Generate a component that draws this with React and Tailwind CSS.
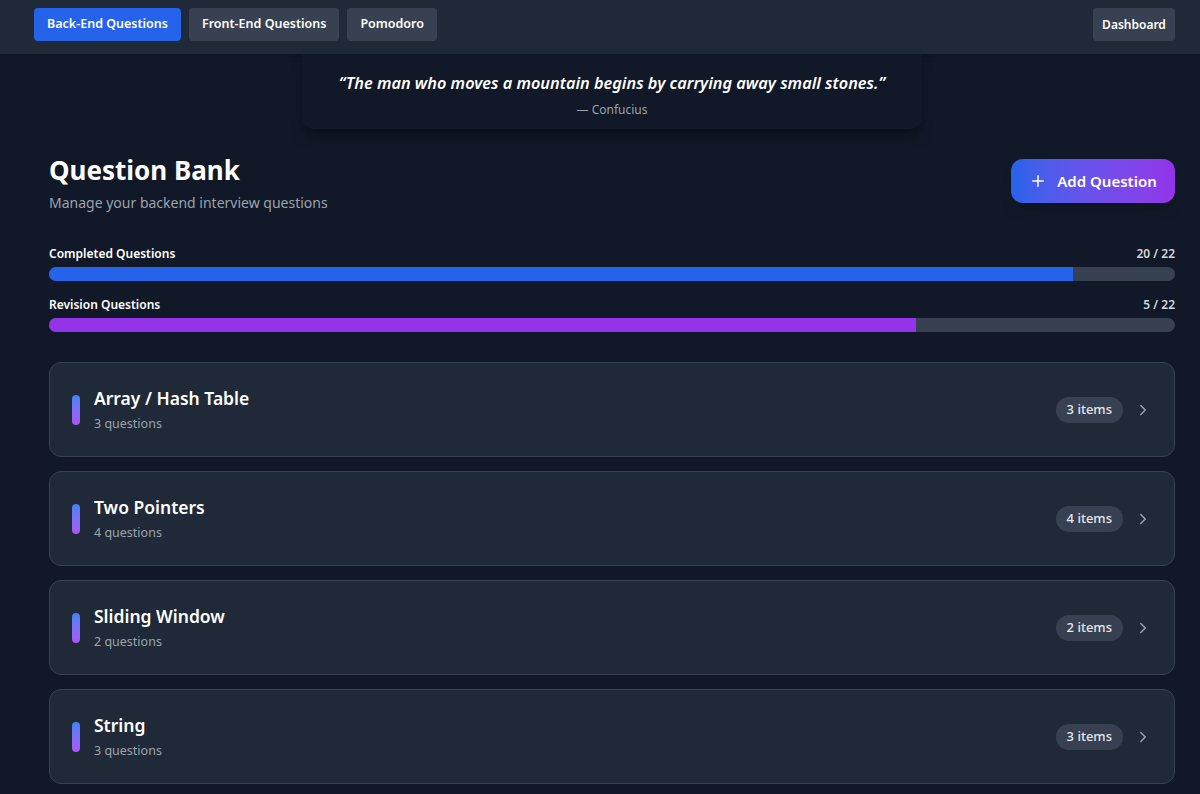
import { Plus, ChevronRight } from "lucide-react";

const topics = [
  { name: "Array / Hash Table", count: 3 },
  { name: "Two Pointers", count: 4 },
  { name: "Sliding Window", count: 2 },
  { name: "String", count: 3 },
];

function Progress({ label, done, total, pct, color }) {
  return (
    <div>
      <div className="flex justify-between text-[12px] font-semibold text-white mb-[4px]">
        <span>{label}</span>
        <span className="text-[#d1d5db]">{done} / {total}</span>
      </div>
      <div className="h-[14px] bg-[#374151] rounded-full overflow-hidden">
        <div className={`h-full ${color}`} style={{ width: pct }} />
      </div>
    </div>
  );
}

export default function App() {
  return (
    <div className="min-h-screen bg-[#111827] text-white" style={{ fontFamily: '"Noto Sans", "Open Sans", sans-serif' }}>
      {/* nav */}
      <nav className="h-[54px] bg-[#1f2937] flex items-start justify-between pt-[8px] pl-[34px] pr-[25px] shadow-md">
        <div className="flex gap-2">
          <button className="h-[33px] px-[13px] rounded bg-[#2563eb] text-[12.5px] font-semibold">Back-End Questions</button>
          <button className="h-[33px] px-[13px] rounded bg-[#374151] text-[12.5px] font-semibold">Front-End Questions</button>
          <button className="h-[33px] px-[13px] rounded bg-[#374151] text-[12.5px] font-semibold">Pomodoro</button>
        </div>
        <button className="h-[33px] w-[82px] rounded bg-[#374151] text-[12px] font-semibold">Dashboard</button>
      </nav>

      <main className="pl-[49px] pr-[25px]">
        {/* quote */}
        <div className="flex justify-center">
          <div className="w-[620px] pt-[17px] pb-[10px] rounded-b-xl bg-[#111827] shadow-lg shadow-black/30 text-center">
            <p className="text-[16.3px] italic font-semibold leading-6">“The man who moves a mountain begins by carrying away small stones.”</p>
            <p className="text-[12px] text-[#9ca3af] mt-[6px]">— Confucius</p>
          </div>
        </div>

        {/* header */}
        <div className="flex justify-between items-start mt-[23px]">
          <div>
            <h1 className="text-[26px] font-bold leading-9">Question Bank</h1>
            <p className="text-[14px] text-[#9ca3af] mt-[4px]">Manage your backend interview questions</p>
          </div>
          <button className="mt-[7px] h-[44px] w-[164px] rounded-xl bg-gradient-to-r from-[#2563eb] to-[#9333ea] flex items-center justify-center gap-[10px] text-[15px] font-semibold shadow-lg">
            <Plus size={18} strokeWidth={2} />
            Add Question
          </button>
        </div>

        {/* progress */}
        <div className="mt-[32px] flex flex-col gap-[15px]">
          <Progress label="Completed Questions" done={20} total={22} pct="90.9%" color="bg-[#2563eb]" />
          <Progress label="Revision Questions" done={5} total={22} pct="77%" color="bg-[#9333ea]" />
        </div>

        {/* topics */}
        <div className="mt-[30px] flex flex-col gap-[14px]">
          {topics.map((t) => (
            <div key={t.name} className="h-[95px] rounded-xl border border-[#374151] bg-[#1f2937] flex items-center pl-[22px] pr-[22px]">
              <div className="w-2 h-[30px] rounded-full bg-gradient-to-b from-[#3b82f6] to-[#a855f7]" />
              <div className="ml-[14px]">
                <div className="text-[17.5px] font-semibold leading-6">{t.name}</div>
                <div className="text-[12.5px] text-[#9ca3af] mt-[5px]">{t.count} questions</div>
              </div>
              <div className="ml-auto flex items-center gap-[11px]">
                <span className="h-[26px] px-[11px] flex items-center rounded-full bg-[#374151] text-[13px] font-medium text-[#e5e7eb]">{t.count} items</span>
                <ChevronRight size={18} className="text-[#9ca3af]" />
              </div>
            </div>
          ))}
        </div>
      </main>
    </div>
  );
}
